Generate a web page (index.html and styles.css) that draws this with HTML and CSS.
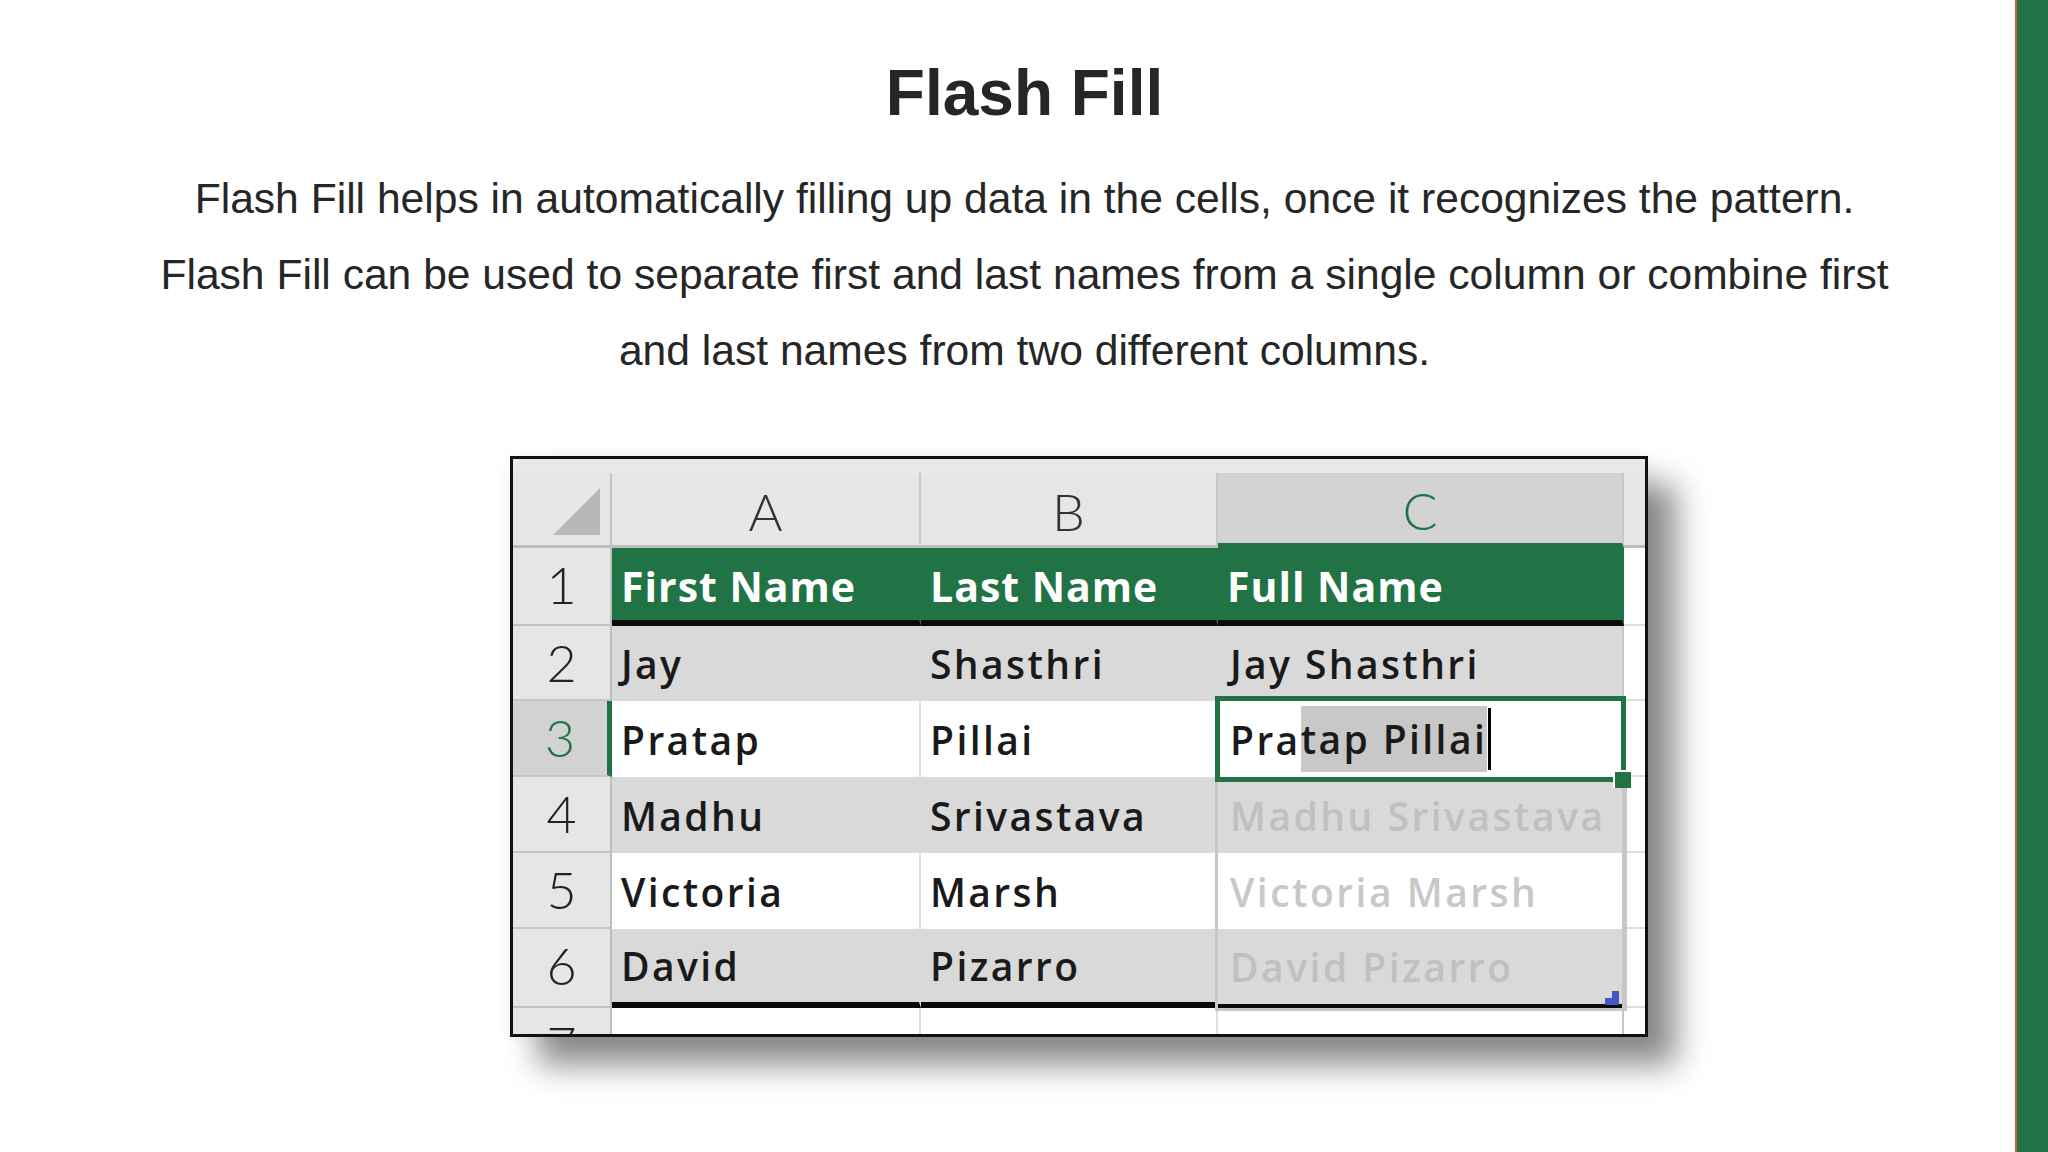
FILE: index.html
```html
<!DOCTYPE html>
<html lang="en">
<head>
<meta charset="utf-8">
<title>Flash Fill</title>
<link rel="stylesheet" href="styles.css">
</head>
<body>
<div class="page">
  <main class="content">
    <h1 class="title">Flash Fill</h1>
    <p class="lead">Flash Fill helps in automatically filling up data in the cells, once it recognizes the pattern.<br>Flash Fill can be used to separate first and last names from a single column or combine first<br>and last names from two different columns.</p>
    <figure class="shot">
      <div class="sheet">
        <!-- column headers -->
        <div class="corner"><span class="tri"></span></div>
        <div class="colhead">A</div>
        <div class="colhead">B</div>
        <div class="colhead colhead-sel">C</div>
        <div class="colhead colhead-end"></div>

        <!-- row 1 -->
        <div class="rowhead"><span class="num">1</span></div>
        <div class="cell hdr">First Name</div>
        <div class="cell hdr">Last Name</div>
        <div class="cell hdr">Full Name</div>
        <div class="cell end"></div>

        <!-- row 2 -->
        <div class="rowhead"><span class="num">2</span></div>
        <div class="cell gray">Jay</div>
        <div class="cell gray">Shasthri</div>
        <div class="cell gray last">Jay Shasthri</div>
        <div class="cell end"></div>

        <!-- row 3 -->
        <div class="rowhead rowhead-sel"><span class="num">3</span></div>
        <div class="cell white">Pratap</div>
        <div class="cell white">Pillai</div>
        <div class="cell white last active">Pra<span class="sel">tap Pillai</span><span class="caret"></span><span class="handle"></span></div>
        <div class="cell end"></div>

        <!-- row 4 -->
        <div class="rowhead"><span class="num">4</span></div>
        <div class="cell gray">Madhu</div>
        <div class="cell gray">Srivastava</div>
        <div class="ghost">
          <div class="gcell gray">Madhu Srivastava</div>
          <div class="gcell white">Victoria Marsh</div>
          <div class="gcell gray gfinal">David Pizarro</div>
          <svg class="ghost-mark" width="14" height="14" viewBox="0 0 14 14"><polygon points="7,0 14,0 14,14 0,14 0,7 7,7" fill="#4357c2"/></svg>
        </div>
        <div class="cell end"></div>

        <!-- row 5 -->
        <div class="rowhead"><span class="num">5</span></div>
        <div class="cell white">Victoria</div>
        <div class="cell white">Marsh</div>
        <div class="cell end"></div>

        <!-- row 6 -->
        <div class="rowhead"><span class="num">6</span></div>
        <div class="cell gray final">David</div>
        <div class="cell gray final">Pizarro</div>
        <div class="cell end"></div>

        <!-- row 7 (cut off) -->
        <div class="rowhead rowhead-cut"><span class="num">7</span></div>
        <div class="cell white cut"></div>
        <div class="cell white cut"></div>
        <div class="cell white cut last"></div>
        <div class="cell end cut"></div>
      </div>
    </figure>
  </main>
  <aside class="rail"></aside>
</div>
</body>
</html>
```

FILE: styles.css
```css
html, body {
  margin: 0;
  padding: 0;
  background: #ffffff;
}

.page {
  display: flex;
  width: 2048px;
  height: 1152px;
  overflow: hidden;
}

.content {
  flex: 1;
  padding-left: 34px;
  box-sizing: border-box;
  font-family: "Liberation Sans", Arial, sans-serif;
  color: #262626;
}

.title {
  margin: 0;
  padding-top: 57px;
  font-size: 64px;
  line-height: 72px;
  font-weight: 700;
  text-align: center;
}

.lead {
  margin: 31px 0 0;
  font-size: 42.6px;
  line-height: 76px;
  text-align: center;
  white-space: nowrap;
}

.shot {
  margin: 68px 0 0 476px;
  width: 1138px;
}

.rail {
  width: 31px;
  flex: none;
  background: #217346;
  border-left: 2px solid #c3612f;
}

/* ---------- spreadsheet picture ---------- */
.sheet {
  display: grid;
  grid-template-columns: 99px 309px 297px 406px 21px;
  grid-template-rows: 75px 78px 75px 76px 76px 76px 79px 26px;
  padding-top: 14px;
  background: #e8e8e8;
  border: 3px solid #111111;
  box-shadow: 0 0 16px rgba(0, 0, 0, 0.06), 28px 28px 30px rgba(0, 0, 0, 0.46);
  font-family: "Open Sans", "Noto Sans", sans-serif;
  color: #1a1a1a;
}

.corner {
  position: relative;
  background: #e6e6e6;
  border-right: 2px solid #c4c4c4;
  border-bottom: 3px solid #bdbdbd;
}

.tri {
  position: absolute;
  right: 10px;
  bottom: 10px;
  width: 0;
  height: 0;
  border-left: 47px solid transparent;
  border-bottom: 47px solid #b8b8b8;
}

.colhead {
  display: flex;
  align-items: center;
  justify-content: center;
  background: #e6e6e6;
  border-right: 2px solid #c8c8c8;
  border-bottom: 3px solid #bdbdbd;
  font-family: "Lato", "Open Sans", sans-serif;
  font-weight: 300;
  font-size: 52px;
  color: #333333;
  padding-top: 4px;
}

.colhead-sel {
  background: #d3d3d3;
  border-bottom: 5px solid #217346;
  color: #217346;
}

.colhead-end {
  border-right: 0;
}

.rowhead {
  display: flex;
  justify-content: center;
  align-items: flex-start;
  background: #e6e6e6;
  border-right: 2px solid #bebebe;
  border-bottom: 2px solid #c4c4c4;
  overflow: hidden;
  font-family: "Lato", "Open Sans", sans-serif;
  font-weight: 300;
  font-size: 52px;
  color: #222222;
}

.num {
  display: block;
  line-height: 1;
  margin-top: 10px;
}

.rowhead-sel {
  background: #d2d2d2;
  border-right: 5px solid #217346;
  color: #217346;
}

.rowhead-cut {
  border-bottom: 0;
}

.cell {
  display: flex;
  align-items: center;
  padding: 0 9px;
  font-size: 39px;
  font-weight: 600;
  letter-spacing: 2.4px;
  white-space: nowrap;
  border-right: 2px solid transparent;
}

.cell.hdr {
  background: #217346;
  color: #ffffff;
  font-weight: 700;
  font-size: 41px;
  letter-spacing: 1px;
  border-right-color: #217346;
  border-bottom: 6px solid #0a0a0a;
  padding-top: 4px;
}

.cell.gray {
  background: #d9d9d9;
  border-right-color: #d9d9d9;
}

.cell.white {
  background: #ffffff;
  border-right-color: #dedede;
}

.cell.last {
  border-right: 2px solid #c6c6c6;
  padding-left: 12px;
}

.cell.final {
  border-bottom: 6px solid #0a0a0a;
}

.cell.end {
  background: #ffffff;
  border-right: 0;
  border-bottom: 2px solid #dedede;
}

.cell.cut {
  border-bottom: 0;
}

/* active cell C3 */
.cell.active {
  position: relative;
  z-index: 3;
}

.cell.active::after {
  content: "";
  position: absolute;
  left: -3px;
  right: -4px;
  top: -5px;
  bottom: -5px;
  border: 5px solid #217346;
  pointer-events: none;
}

.sel {
  display: inline-block;
  background: #c8c8c8;
  line-height: 66px;
}

.caret {
  display: inline-block;
  width: 3px;
  height: 62px;
  background: #000000;
  vertical-align: -15px;
  margin-left: 1px;
}

.handle {
  position: absolute;
  right: -9px;
  bottom: -11px;
  width: 16px;
  height: 16px;
  background: #217346;
  border-left: 2px solid #ffffff;
  border-top: 2px solid #ffffff;
  z-index: 4;
}

/* flash fill preview C4:C6 */
.ghost {
  grid-row: span 3;
  position: relative;
  z-index: 2;
  display: grid;
  grid-template-rows: 76px 76px 79px;
  outline: 3px solid #c7c7c7;
  border-right: 2px solid #c6c6c6;
}

.gcell {
  display: flex;
  align-items: center;
  padding: 0 12px;
  font-size: 39px;
  font-weight: 600;
  letter-spacing: 2.5px;
  white-space: nowrap;
  color: #c0c0c0;
}

.gcell.gray {
  background: #d9d9d9;
}

.gcell.white {
  background: #ffffff;
  color: #c8c8c8;
}

.gcell.gfinal {
  border-bottom: 4px solid #0a0a0a;
}

.ghost-mark {
  position: absolute;
  right: 3px;
  bottom: 3px;
}
```
